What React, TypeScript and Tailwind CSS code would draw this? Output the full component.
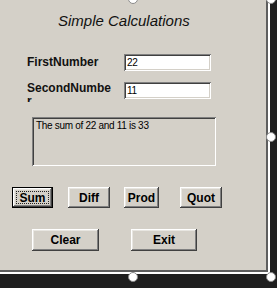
const raised =
  'shadow-[inset_-1px_-1px_#404040,inset_1px_1px_#ffffff,inset_-2px_-2px_#808080,inset_2px_2px_#e8e6e1]';
const sunken =
  'shadow-[inset_1px_1px_#808080,inset_-1px_-1px_#ffffff,inset_2px_2px_#404040,inset_-2px_-2px_#d4d0c8]';

function Btn({ label, className, focused }: { label: string; className: string; focused?: boolean }) {
  if (focused) {
    return (
      <div className={`flex shrink-0 border border-black bg-[#d4d0c8] ${className}`}>
        <div className={`flex flex-1 items-center justify-center p-[3px] ${raised}`}>
          <span className="flex h-full w-full items-center justify-center border border-dotted border-[#222] text-[12px] font-bold leading-none text-black">
            {label}
          </span>
        </div>
      </div>
    );
  }
  return (
    <div
      className={`flex shrink-0 items-center justify-center bg-[#d4d0c8] text-[12px] font-bold leading-none text-black ${raised} ${className}`}
    >
      {label}
    </div>
  );
}

function Handle({ className }: { className: string }) {
  return (
    <div
      className={`absolute h-[10px] w-[10px] rounded-full border border-[#8a8a8a] bg-white ${className}`}
    />
  );
}

export default function App() {
  return (
    <div className="relative h-[288px] w-[277px] overflow-hidden bg-[#1f1f1f] font-['Liberation_Sans',Arial,sans-serif]">
      <div className="h-[274px] w-[270px] border-b-2 border-r-2 border-white">
        <div className="flex h-[272px] w-[268px] flex-col border-b-2 border-r-2 border-[#5e5e5e] bg-[#d4d0c8]">
          <h1 className="ml-[58px] mt-[12px] h-[18px] text-[15px] italic leading-[18px] text-[#111]">
            Simple Calculations
          </h1>

          <div className="mt-[24px] flex h-[17px] items-center">
            <span className="ml-[27px] w-[97px] text-[12px] font-bold leading-[13px] text-[#111]">
              FirstNumber
            </span>
            <div className={`flex h-[17px] w-[87px] items-center bg-white pl-[3px] text-[10px] tracking-[-0.3px] text-black ${sunken}`}>
              22
            </div>
          </div>

          <div className="mt-[11px] flex h-[20px] items-start">
            <span className="ml-[27px] h-[20px] w-[86px] overflow-hidden break-all text-[12px] font-bold leading-[13px] text-[#111]">
              SecondNumber
            </span>
            <div className={`ml-[11px] flex h-[17px] w-[87px] items-center bg-white pl-[3px] text-[10px] tracking-[-0.3px] text-black ${sunken}`}>
              11
            </div>
          </div>

          <div className={`ml-[32px] mt-[15px] h-[49px] w-[184px] px-[4px] pt-[3px] text-[10px] leading-[12px] tracking-[-0.3px] text-black ${sunken}`}>
            The sum of 22 and 11 is 33
          </div>

          <div className="mt-[21px] flex h-[21px]">
            <Btn label="Sum" focused className="ml-[12px] w-[41px]" />
            <Btn label="Diff" className="ml-[15px] w-[42px]" />
            <Btn label="Prod" className="ml-[14px] w-[35px]" />
            <Btn label="Quot" className="ml-[21px] w-[42px]" />
          </div>

          <div className="mt-[21px] flex h-[22px]">
            <Btn label="Clear" className="ml-[32px] w-[67px]" />
            <Btn label="Exit" className="ml-[32px] w-[66px]" />
          </div>
        </div>
      </div>

      <Handle className="left-[128px] top-[-6px]" />
      <Handle className="left-[266px] top-[-6px]" />
      <Handle className="left-[266px] top-[132px]" />
      <Handle className="left-[266px] top-[272px]" />
      <Handle className="left-[128px] top-[272px]" />
    </div>
  );
}
